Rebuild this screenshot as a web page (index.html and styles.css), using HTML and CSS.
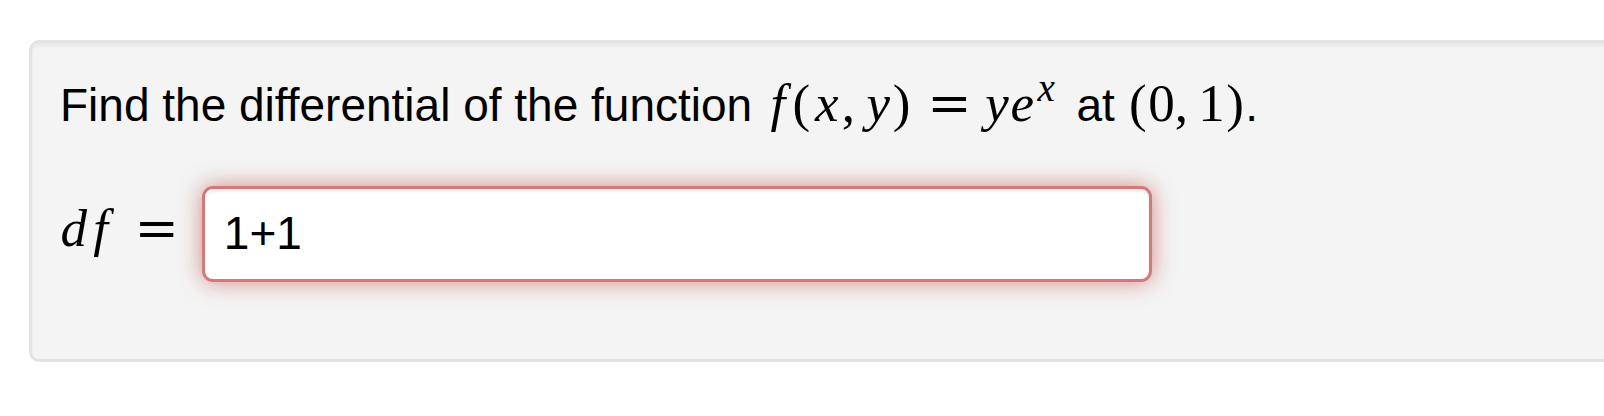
FILE: index.html
```html
<!DOCTYPE html>
<html>
<head>
<meta charset="utf-8">
<link rel="stylesheet" href="styles.css">
</head>
<body>
<div class="well">
  <p class="question">Find the differential of the function <span class="math"><span class="mi g-f">f</span><span class="mo g-paren">(</span><span class="mi g-x">x</span><span class="mo g-comma">,</span><span class="mi g-y">y</span><span class="mo g-paren">)</span><span class="mo g-eq">=</span><span class="mi g-y">y</span><span class="mi g-e">e</span><span class="sup">x</span></span> at <span class="math"><span class="mo g-paren">(</span><span class="mn g-digit">0</span><span class="mo g-comma">,</span><span class="mn g-digit">1</span><span class="mo g-paren">)</span></span>.</p>
  <div class="answer-row">
    <span class="math label"><span class="mi g-d">d</span><span class="mi g-f g-ic">f</span><span class="mo g-eq g-eq-end">=</span></span>
    <input class="answer" type="text" value="1+1">
  </div>
</div>
</body>
</html>
```

FILE: styles.css
```css
html, body {
  margin: 0;
  padding: 0;
  background: #ffffff;
  overflow: hidden;
}

body {
  font-family: "Liberation Sans", Arial, sans-serif;
  color: #000000;
}

.well {
  box-sizing: border-box;
  height: 322px;
  margin: 40px -120px 0 29px;
  padding: 32px 28px 0 28px;
  background: #f4f4f4;
  border: 3px solid #e3e3e3;
  border-radius: 10px;
  box-shadow: inset 0 3px 3px rgba(0, 0, 0, 0.05);
}

.question {
  margin: 0 0 51px 0;
  font-size: 46px;
  line-height: 60px;
  white-space: nowrap;
}

.math {
  font-family: "Liberation Serif", "Times New Roman", serif;
  font-size: 53px;
  line-height: 1;
  white-space: nowrap;
}

.math > span {
  display: inline-block;
  text-align: center;
  line-height: 1;
}

.mi { font-style: italic; }
.mo, .mn { font-style: normal; }

.g-f { width: 0.49em; }
.g-ic { margin-right: 0.108em; }
.g-d { width: 0.52em; }
.g-x { width: 0.572em; }
.g-y { width: 0.49em; }
.g-e { width: 0.466em; }
.g-paren { width: 0.389em; }
.g-comma { width: 0.278em; margin-right: 0.167em; text-align: left !important; }
.g-digit { width: 0.5em; }

.math > .g-eq {
  width: 0.778em;
  margin: 0 0.29em;
  font-family: "DejaVu Serif", serif;
  font-size: 1em;
}
.math > .g-eq-end { margin-right: 0; }

.math > .sup {
  display: inline;
  font-style: italic;
  font-size: 0.74em;
  line-height: 0;
  vertical-align: 20px;
  margin-left: 3px;
  margin-right: 0.22em;
}

.answer-row {
  display: flex;
  align-items: flex-start;
}

.label {
  display: block;
  flex: none;
  line-height: 53px;
  margin-top: 15px;
}

.answer {
  box-sizing: border-box;
  flex: none;
  width: 950px;
  height: 96px;
  margin: 0 0 0 26px;
  padding: 0 19px 2px 19px;
  font-family: "Liberation Sans", Arial, sans-serif;
  font-size: 46px;
  color: #000000;
  background: #ffffff;
  border: 3px solid #cf7b79;
  border-radius: 11px;
  outline: none;
  box-shadow: inset 0 3px 3px rgba(0, 0, 0, 0.075), 0 0 22px rgba(206, 120, 118, 0.85);
}
```
